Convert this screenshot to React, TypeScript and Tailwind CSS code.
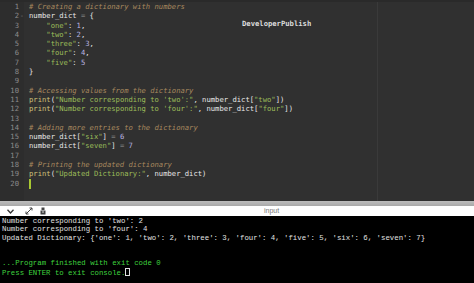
import React from 'react';

// token colours for the editor theme
const C = {
  txt: 'text-[#e8e8e8]',
  cmt: 'text-[#a8895f] italic',
  str: 'text-[#9cbd5a]',
  num: 'text-[#b8b4e0]',
  op: 'text-[#9a9a9a]',
  fn: 'text-[#cfc27a]',
};

type Tok = [string, string];

const lines: Tok[][] = [
  [[C.cmt, '# Creating a dictionary with numbers']],
  [[C.txt, 'number_dict '], [C.op, '='], [C.txt, ' {']],
  [[C.txt, '    '], [C.str, '"one"'], [C.txt, ': '], [C.num, '1'], [C.txt, ',']],
  [[C.txt, '    '], [C.str, '"two"'], [C.txt, ': '], [C.num, '2'], [C.txt, ',']],
  [[C.txt, '    '], [C.str, '"three"'], [C.txt, ': '], [C.num, '3'], [C.txt, ',']],
  [[C.txt, '    '], [C.str, '"four"'], [C.txt, ': '], [C.num, '4'], [C.txt, ',']],
  [[C.txt, '    '], [C.str, '"five"'], [C.txt, ': '], [C.num, '5']],
  [[C.txt, '}']],
  [],
  [[C.cmt, '# Accessing values from the dictionary']],
  [[C.fn, 'print'], [C.txt, '('], [C.str, '"Number corresponding to \'two\':"'], [C.txt, ', number_dict['], [C.str, '"two"'], [C.txt, '])']],
  [[C.fn, 'print'], [C.txt, '('], [C.str, '"Number corresponding to \'four\':"'], [C.txt, ', number_dict['], [C.str, '"four"'], [C.txt, '])']],
  [],
  [[C.cmt, '# Adding more entries to the dictionary']],
  [[C.txt, 'number_dict['], [C.str, '"six"'], [C.txt, '] '], [C.op, '='], [C.txt, ' '], [C.num, '6']],
  [[C.txt, 'number_dict['], [C.str, '"seven"'], [C.txt, '] '], [C.op, '='], [C.txt, ' '], [C.num, '7']],
  [],
  [[C.cmt, '# Printing the updated dictionary']],
  [[C.fn, 'print'], [C.txt, '('], [C.str, '"Updated Dictionary:"'], [C.txt, ', number_dict)']],
  [],
];

const output = [
  "Number corresponding to 'two': 2",
  "Number corresponding to 'four': 4",
  "Updated Dictionary: {'one': 1, 'two': 2, 'three': 3, 'four': 4, 'five': 5, 'six': 6, 'seven': 7}",
  '',
  '',
];

export default function App() {
  return (
    <div className="w-[474px] h-[283px] overflow-hidden bg-black flex flex-col">
      {/* Editor */}
      <div className="relative h-[201px] bg-[#303030] flex border-t-[2px] border-t-[#2a2a2a] font-['DejaVu_Sans_Mono',monospace] text-[7.2px] leading-[9.3px]">
        <div className="w-[24px] bg-[#2d2d2d] text-right text-[#8c8c8c]">
          {lines.map((_, i) => (
            <div key={i} className="relative pr-[5px] h-[9.3px]">
              {i + 1}
              {i === 1 && <span className="absolute right-[0px] top-0 text-[#777]">-</span>}
            </div>
          ))}
        </div>
        <div className="flex-1 pl-[5px] whitespace-pre">
          {lines.map((toks, i) => (
            <div key={i} className="h-[9.3px]">
              {toks.map(([c, t], j) => (
                <span key={j} className={c}>{t}</span>
              ))}
              {i === 19 && <span className="inline-block w-[1.5px] h-[10px] bg-[#a8c832] align-[-2px]" />}
            </div>
          ))}
        </div>
        {/* print margin */}
        <div className="absolute left-[377px] top-0 bottom-0 w-px bg-[#3a3a3a]" />
        <div className="absolute left-[242px] top-[17px] text-[7.2px] font-bold text-[#dcdcdc]">DeveloperPublish</div>
      </div>

      {/* Splitter + console header */}
      <div className="h-[5px] bg-gradient-to-b from-[#bdbdbd] to-[#a9a9a9]" />
      <div className="relative h-[10px] bg-white flex items-center gap-[7px] pl-[7px]">
        <svg width="7" height="5" viewBox="0 0 7 5" className="text-[#333]">
          <path d="M0.5 0.8 L3.5 4 L6.5 0.8" fill="none" stroke="currentColor" strokeWidth="1.3" />
        </svg>
        <svg width="8" height="8" viewBox="0 0 8 8" className="text-[#444] ml-[4px]">
          <path d="M1 7 L7 1 M4.5 1 H7 V3.5 M1 4.5 V7 H3.5" fill="none" stroke="currentColor" strokeWidth="1" />
        </svg>
        <svg width="6" height="8" viewBox="0 0 6 8" className="text-[#444]">
          <rect x="1.5" y="0.5" width="3" height="2.5" fill="currentColor" />
          <rect x="0.5" y="3.5" width="5" height="4" fill="currentColor" />
          <path d="M2 5 H4" stroke="#fff" strokeWidth="0.8" />
        </svg>
        <span className="absolute left-[264px] top-[1px] text-[7px] leading-[8px] text-[#777] font-['Liberation_Sans',sans-serif]">input</span>
      </div>

      {/* Console */}
      <div className="flex-1 pl-[2px] pt-[0.5px] font-['Liberation_Mono',monospace] text-[7.35px] leading-[8.5px] whitespace-pre">
        {output.map((l, i) => (
          <div key={i} className="h-[8.5px] text-[#e2e2e2]">{l}</div>
        ))}
        <div className="h-[8.5px] text-[#3fd43f]">...Program finished with exit code 0</div>
        <div className="h-[8.5px] text-[#3fd43f]">
          Press ENTER to exit console.
          <span className="inline-block w-[5px] h-[8px] border border-[#e0e0e0] align-[-1px]" />
        </div>
      </div>
    </div>
  );
}
